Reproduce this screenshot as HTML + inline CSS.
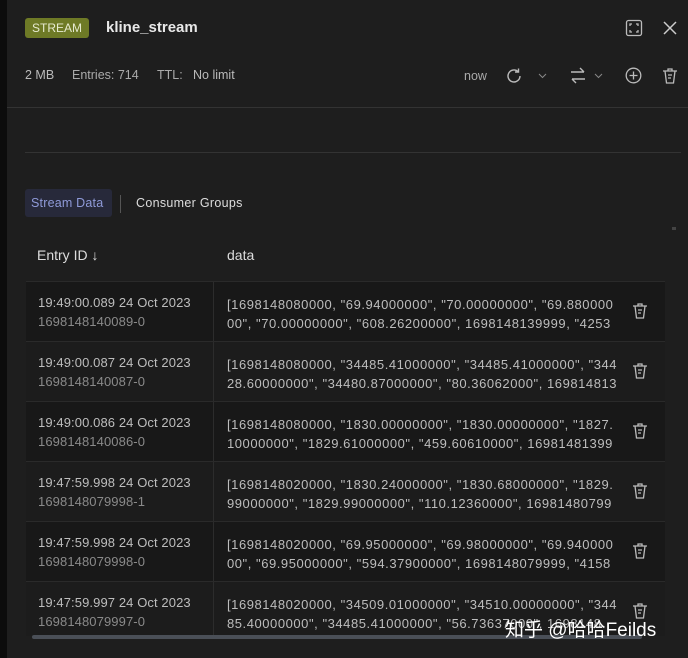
<!DOCTYPE html><html><head><style>
*{margin:0;padding:0;box-sizing:border-box}
body{width:688px;height:658px;background:#1e1e1e;font-family:"Liberation Sans","Noto Sans CJK SC",sans-serif;color:#d8d8d8;position:relative;overflow:hidden}
.strip{position:absolute;left:0;top:0;width:7px;height:658px;background:#0c0c0c}
.abs{position:absolute}
.badge{left:25px;top:18px;width:64px;height:20px;background:#6e7a26;border-radius:3px;color:#e6ead0;font-size:12px;text-align:center;line-height:20px}
.row{position:absolute;left:26px;width:639px;height:60px;border-top:1px solid #2a2a2a}
.row .c1{position:absolute;left:0;top:0;width:188px;height:60px;border-right:1px solid #2c2c2c}
.t1{position:absolute;left:12px;top:13px;font-size:13px;color:#bdbdbd;white-space:nowrap;letter-spacing:0.1px}
.t2{position:absolute;left:12px;top:32px;font-size:13px;color:#8a8a8a;letter-spacing:0.1px}
.d{position:absolute;left:201px;top:13px;width:392px;font-size:13px;line-height:19px;color:#bdbdbd;height:38px;overflow:hidden;word-break:break-all;letter-spacing:0.55px}
.tr{position:absolute;left:606px;top:20px}
</style></head><body>
<div class="strip"></div>
<div class="abs badge">STREAM</div>
<div class="abs" style="left:106px;top:19px;font-size:15px;color:#e8e8e8;font-weight:bold">kline_stream</div>
<svg class="abs" style="left:625px;top:19px" width="18" height="18" viewBox="0 0 18 18" fill="none" stroke="#bbb" stroke-width="1.3"><rect x="1.5" y="1.5" width="15" height="15" rx="2"/><path d="M5 7V5h2M11 5h2v2M13 11v2h-2M7 13H5v-2"/></svg>
<svg class="abs" style="left:662px;top:20px" width="16" height="16" viewBox="0 0 16 16" stroke="#ccc" stroke-width="1.5"><path d="M2 2L14 14M14 2L2 14"/></svg>
<div class="abs" style="left:25px;top:68px;font-size:12.5px;color:#bbb">2 MB</div>
<div class="abs" style="left:72px;top:68px;font-size:12.5px;color:#aaa">Entries: 714</div>
<div class="abs" style="left:157px;top:68px;font-size:12.5px;color:#aaa">TTL:</div>
<div class="abs" style="left:193px;top:68px;font-size:12.5px;color:#bbb">No limit</div>
<div class="abs" style="left:464px;top:69px;font-size:12.5px;color:#aaa">now</div>
<svg class="abs" style="left:505px;top:67px" width="18" height="18" viewBox="0 0 18 18" fill="none" stroke="#bbb" stroke-width="1.4"><path d="M15 9a6 6 0 1 1-2-4.5"/><path d="M13.5 1.5v3.5H10"/></svg>
<svg class="abs" style="left:538px;top:73px" width="9" height="6" viewBox="0 0 9 6" fill="none" stroke="#888"><path d="M1 1l3.5 3.5L8 1"/></svg>
<svg class="abs" style="left:570px;top:67px" width="16" height="18" viewBox="0 0 16 18" fill="none" stroke="#bbb" stroke-width="1.4"><path d="M1 5h13M10 1l4 4M15 12H2M6 16l-4-4"/></svg>
<svg class="abs" style="left:594px;top:73px" width="9" height="6" viewBox="0 0 9 6" fill="none" stroke="#888"><path d="M1 1l3.5 3.5L8 1"/></svg>
<svg class="abs" style="left:625px;top:67px" width="17" height="17" viewBox="0 0 17 17" fill="none" stroke="#bbb" stroke-width="1.3"><circle cx="8.5" cy="8.5" r="7.3"/><path d="M8.5 4.5v8M4.5 8.5h8"/></svg>
<svg class="abs" style="left:662px;top:67px" width="16" height="18" viewBox="0 0 16 18" fill="none" stroke="#bbb" stroke-width="1.3"><path d="M1 4h14M6 4V2h4v2M3 4l1.5 12h7L13 4M6 8h4M6 11h3"/></svg>
<div class="abs" style="left:7px;top:107px;width:681px;height:1px;background:#333"></div>
<div class="abs" style="left:25px;top:152px;width:656px;height:1px;background:#333"></div>
<div class="abs" style="left:25px;top:189px;width:87px;height:28px;background:#27293a;border-radius:3px"></div>
<div class="abs" style="left:31px;top:196px;font-size:12.5px;color:#8f9ad8;letter-spacing:0.2px">Stream Data</div>
<div class="abs" style="left:120px;top:195px;width:1px;height:18px;background:#555"></div>
<div class="abs" style="left:136px;top:196px;font-size:12.5px;color:#ddd;letter-spacing:0.3px">Consumer Groups</div>
<div class="abs" style="left:672px;top:227px;width:4px;height:3px;background:#444"></div>
<div class="abs" style="left:37px;top:247px;font-size:14px;color:#ddd">Entry ID ↓</div>
<div class="abs" style="left:227px;top:247px;font-size:14px;color:#ddd">data</div>

<div class="row" style="top:281px;background:#181818"><div class="c1"></div><div class="t1">19:49:00.089 24 Oct 2023</div><div class="t2">1698148140089-0</div><div class="d">[1698148080000, "69.94000000", "70.00000000", "69.88000000", "70.00000000", "608.26200000", 1698148139999, "42536…</div><svg class="tr" width="16" height="18" viewBox="0 0 16 18" fill="none" stroke="#bbb" stroke-width="1.3"><path d="M1 4h14M6 4V2h4v2M3 4l1.5 12h7L13 4M6 8h4M6 11h3"/></svg></div>
<div class="row" style="top:341px;background:#1c1c1c"><div class="c1"></div><div class="t1">19:49:00.087 24 Oct 2023</div><div class="t2">1698148140087-0</div><div class="d">[1698148080000, "34485.41000000", "34485.41000000", "34428.60000000", "34480.87000000", "80.36062000", 1698148139…</div><svg class="tr" width="16" height="18" viewBox="0 0 16 18" fill="none" stroke="#bbb" stroke-width="1.3"><path d="M1 4h14M6 4V2h4v2M3 4l1.5 12h7L13 4M6 8h4M6 11h3"/></svg></div>
<div class="row" style="top:401px;background:#181818"><div class="c1"></div><div class="t1">19:49:00.086 24 Oct 2023</div><div class="t2">1698148140086-0</div><div class="d">[1698148080000, "1830.00000000", "1830.00000000", "1827.10000000", "1829.61000000", "459.60610000", 1698148139999, "…</div><svg class="tr" width="16" height="18" viewBox="0 0 16 18" fill="none" stroke="#bbb" stroke-width="1.3"><path d="M1 4h14M6 4V2h4v2M3 4l1.5 12h7L13 4M6 8h4M6 11h3"/></svg></div>
<div class="row" style="top:461px;background:#1c1c1c"><div class="c1"></div><div class="t1">19:47:59.998 24 Oct 2023</div><div class="t2">1698148079998-1</div><div class="d">[1698148020000, "1830.24000000", "1830.68000000", "1829.99000000", "1829.99000000", "110.12360000", 1698148079999, "…</div><svg class="tr" width="16" height="18" viewBox="0 0 16 18" fill="none" stroke="#bbb" stroke-width="1.3"><path d="M1 4h14M6 4V2h4v2M3 4l1.5 12h7L13 4M6 8h4M6 11h3"/></svg></div>
<div class="row" style="top:521px;background:#181818"><div class="c1"></div><div class="t1">19:47:59.998 24 Oct 2023</div><div class="t2">1698148079998-0</div><div class="d">[1698148020000, "69.95000000", "69.98000000", "69.94000000", "69.95000000", "594.37900000", 1698148079999, "41589.…</div><svg class="tr" width="16" height="18" viewBox="0 0 16 18" fill="none" stroke="#bbb" stroke-width="1.3"><path d="M1 4h14M6 4V2h4v2M3 4l1.5 12h7L13 4M6 8h4M6 11h3"/></svg></div>
<div class="row" style="top:581px;height:55px;background:#1c1c1c"><div class="c1" style="height:55px"></div><div class="t1">19:47:59.997 24 Oct 2023</div><div class="t2">1698148079997-0</div><div class="d">[1698148020000, "34509.01000000", "34510.00000000", "34485.40000000", "34485.41000000", "56.73637000", 16981480…</div><svg class="tr" width="16" height="18" viewBox="0 0 16 18" fill="none" stroke="#bbb" stroke-width="1.3"><path d="M1 4h14M6 4V2h4v2M3 4l1.5 12h7L13 4M6 8h4M6 11h3"/></svg></div>
<div class="abs" style="left:32px;top:635px;width:610px;height:4px;background:#4a4f57;border-radius:2px"></div>
<div class="abs" style="left:505px;top:615px;font-size:19px;color:#fff;white-space:nowrap">知乎 @哈哈Feilds</div>
</body></html>
